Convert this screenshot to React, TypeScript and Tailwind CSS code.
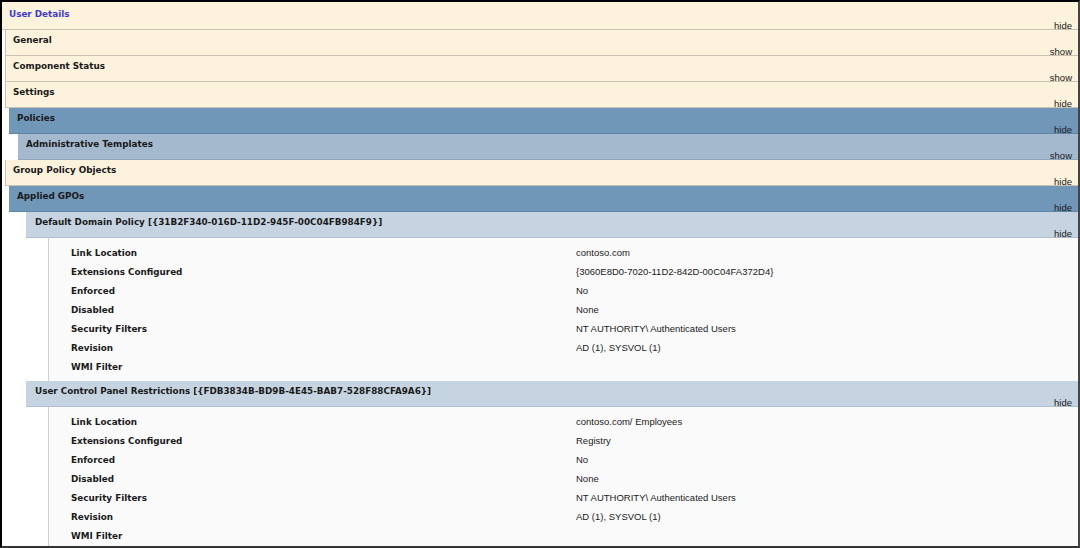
const label = 'font-["DejaVu_Sans",Verdana,sans-serif] font-bold text-[8.8px] text-[#1a1a1a]';
const heading = 'font-["DejaVu_Sans",Verdana,sans-serif] font-bold text-[8.8px]';
const value = 'font-["Liberation_Sans",Arial,sans-serif] text-[9.5px] text-[#1a1a1a]';

type Tone = 'cream' | 'steel' | 'slate' | 'mist';

const TONES: Record<Tone, string> = {
  cream: 'bg-[#fdf2dc] border-b border-[#c8c2b6]',
  steel: 'bg-[#7096b8] border-b border-[#5f84a6]',
  slate: 'bg-[#a4b9ce] border-b border-[#8ea5bc]',
  mist: 'bg-[#c6d4e1] border-b border-[#aebfcf]',
};

function Header({ title, toggle, tone, pad, tall }: { title: string; toggle: 'hide' | 'show'; tone: Tone; pad: string; tall?: boolean }) {
  return (
    <div className={`flex justify-between ${tall ? 'h-[28px]' : 'h-[26px]'} ${TONES[tone]} ${pad}`}>
      <span className={`${tall ? 'pt-[6px] text-[#3b3bd8]' : 'pt-[4px] text-[#1a1a1a]'} ${heading}`}>{title}</span>
      <span className='mb-[-1px] self-end pr-[6px] font-["Liberation_Sans",Arial,sans-serif] text-[9.5px] leading-none text-[#1a1a1a]'>{toggle}</span>
    </div>
  );
}

const GPOS = [
  {
    name: 'Default Domain Policy [{31B2F340-016D-11D2-945F-00C04FB984F9}]',
    rows: [
      ['Link Location', 'contoso.com'],
      ['Extensions Configured', '{3060E8D0-7020-11D2-842D-00C04FA372D4}'],
      ['Enforced', 'No'],
      ['Disabled', 'None'],
      ['Security Filters', 'NT AUTHORITY\\ Authenticated Users'],
      ['Revision', 'AD (1), SYSVOL (1)'],
      ['WMI Filter', ''],
    ],
  },
  {
    name: 'User Control Panel Restrictions [{FDB3834B-BD9B-4E45-BAB7-528F88CFA9A6}]',
    rows: [
      ['Link Location', 'contoso.com/ Employees'],
      ['Extensions Configured', 'Registry'],
      ['Enforced', 'No'],
      ['Disabled', 'None'],
      ['Security Filters', 'NT AUTHORITY\\ Authenticated Users'],
      ['Revision', 'AD (1), SYSVOL (1)'],
      ['WMI Filter', ''],
    ],
  },
];

export default function App() {
  return (
    <div className="h-[548px] overflow-hidden border-2 border-r-[#444] border-b-[#333] border-l-black border-t-black bg-white">
      <Header title="User Details" toggle="hide" tone="cream" pad="pl-[7px]" tall />
      <div className="pl-[3px]">
        <div className="border-l border-[#c8c2b6]">
          <Header title="General" toggle="show" tone="cream" pad="pl-[7px]" />
          <Header title="Component Status" toggle="show" tone="cream" pad="pl-[7px]" />
          <Header title="Settings" toggle="hide" tone="cream" pad="pl-[7px]" />
        </div>
        <div className="pl-[4px]">
          <Header title="Policies" toggle="hide" tone="steel" pad="pl-[8px]" />
          <div className="pl-[9px]">
            <Header title="Administrative Templates" toggle="show" tone="slate" pad="pl-[8px]" />
          </div>
        </div>
        <div className="border-l border-[#c8c2b6]">
          <Header title="Group Policy Objects" toggle="hide" tone="cream" pad="pl-[7px]" />
        </div>
        <div className="pl-[4px]">
          <Header title="Applied GPOs" toggle="hide" tone="steel" pad="pl-[8px]" />
          <div className="pl-[17px]">
            {GPOS.map((gpo) => (
              <div key={gpo.name}>
                <Header title={gpo.name} toggle="hide" tone="mist" pad="pl-[9px]" />
                <div className="pl-[22px]">
                  <div className="border-l border-[#cfcfcf] bg-[#fafafa] pt-[6px] pb-[4px]">
                    {gpo.rows.map(([k, v]) => (
                      <div key={k} className="flex h-[19px] items-center">
                        <span className={`${label} w-[527px] shrink-0 pl-[22px]`}>{k}</span>
                        <span className={value}>{v}</span>
                      </div>
                    ))}
                  </div>
                </div>
              </div>
            ))}
          </div>
        </div>
      </div>
    </div>
  );
}
